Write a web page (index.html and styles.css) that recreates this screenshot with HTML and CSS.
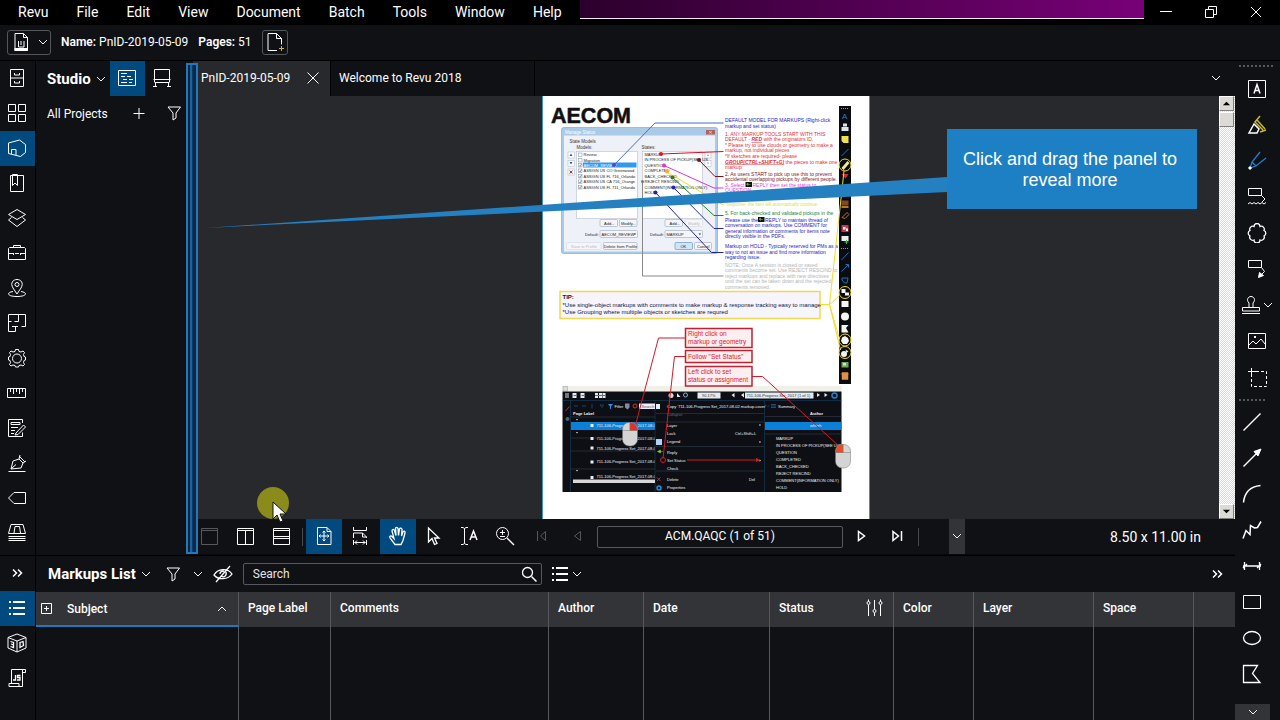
FILE: index.html
```html
<!DOCTYPE html>
<html lang="en">
<head>
	<meta charset="UTF-8">
	<meta name="viewport" content="width=device-width, initial-scale=1.0">
	<title>Revu</title>
	<link rel="stylesheet" href="styles.css">
</head>
<body>
	<!-- shared icons -->
	<svg class="sprite" aria-hidden="true">
		<symbol id="caret" viewBox="0 0 10 10"><path d="M1 3l4 4 4-4"/></symbol>
		<symbol id="filter" viewBox="0 0 20 20"><path d="M4 4h12.500l-4.500 6v5l-3 2v-7z"/></symbol>
		<symbol id="list" viewBox="0 0 20 20"><path stroke-width="2" d="M2 4h2M6 4h12M2 10h2M6 10h12M2 16h2M6 16h12"/></symbol>
		<symbol id="more" viewBox="0 0 20 20"><path stroke-width="1.500" d="M6 6.500l3.500 3.500-3.500 3.500M11 6.500l3.500 3.500-3.500 3.500"/></symbol>
	</svg>

	<header class="menubar">
		<nav class="menus">
			<button>Revu</button>
			<button>File</button>
			<button>Edit</button>
			<button>View</button>
			<button>Document</button>
			<button>Batch</button>
			<button>Tools</button>
			<button>Window</button>
			<button>Help</button>
		</nav>
		<div class="banner"></div>
		<div class="window-buttons">
			<button aria-label="Minimize"><svg class="icon" viewBox="0 0 20 20"><path d="M4 9.500h12"/></svg></button>
			<button aria-label="Restore"><svg class="icon" viewBox="0 0 20 20"><path d="M4.500 7.500h8v8h-8zM7.500 7v-2.500h8v8h-2.500"/></svg></button>
			<button aria-label="Close"><svg class="icon" viewBox="0 0 20 20"><path d="M5 5l10 10M15 5l-10 10"/></svg></button>
		</div>
	</header>

	<div class="infobar">
		<button class="boxed" aria-label="Document type">
			<svg class="icon" viewBox="0 0 20 20"><path d="M4 1.500h8.500l4 4v13h-12.500zM12.500 1.500v4h4"/><path fill="currentColor" stroke="none" d="M3.500 16h13v3h-13z"/><path d="M7.500 9v6h5.500v-6M10 9v4"/></svg>
			<svg class="caret"><use href="#caret"/></svg>
		</button>
		<p><b>Name:</b> PnID-2019-05-09</p>
		<p><b>Pages:</b> 51</p>
		<button class="boxed add-page" aria-label="Add page">
			<svg class="icon" viewBox="0 0 20 20"><path d="M12 18.500h-9v-17h8.500l5 5v6M11.500 1.500v5h5"/><path class="yellow" d="M16.500 14v5M14 16.500h5"/></svg>
		</button>
	</div>

	<main class="workspace">
		<nav class="rail rail-left" aria-label="Panels">
			<button aria-label="File access"><svg class="icon" viewBox="0 0 20 20"><path d="M3.500 1.500h13v17h-13zM3.500 10h13M7.500 5v2h5v-2M7.500 13v2h5v-2"/></svg></button>
			<button aria-label="Thumbnails"><svg class="icon" viewBox="0 0 20 20"><path d="M1.500 1.500h7v7h-7zM11.500 1.500h7v7h-7zM1.500 11.500h7v7h-7zM11.500 11.500h7v7h-7z"/></svg></button>
			<button class="on" aria-label="Studio"><svg class="icon" viewBox="0 0 20 20"><path d="M1.500 5l11-3 6 4.500v8l-5 4-12-3zM4.500 16v-4.500h4.500v5.500"/></svg></button>
			<button aria-label="Bookmarks"><svg class="icon" viewBox="0 0 20 20"><path d="M3.500 2.500h13v16h-13zM5.500 1.500h5v11l-2.500-2.500-2.500 2.500z"/></svg></button>
			<button aria-label="Layers"><svg class="icon" viewBox="0 0 20 20"><path d="M10 1.500l8.500 5-8.500 5-8.500-5zM4.500 9.500l-3 2.500 8.500 6.500 8.500-6.500-3-2.500"/></svg></button>
			<button aria-label="Tool chest"><svg class="icon" viewBox="0 0 20 20"><path d="M1.500 5.500l1-1h15l1 1v11h-17zM6.500 5v-2.500h7v2.500M1.500 10.500h4.500M8 10.500h4M14 10.500h4.500M6.500 10v2M13.500 10v2"/></svg></button>
			<button aria-label="Places"><svg class="icon" viewBox="0 0 20 20"><path d="M10 16l-4-6c-3-5 0-8.500 4-8.500s7 3.500 4 8.500zM6 13.500c-7 1-6 5 4 5s11-4 4-5"/><circle cx="10" cy="6.500" r="2"/></svg></button>
			<button aria-label="Spaces"><svg class="icon" viewBox="0 0 20 20"><path d="M1.500 18.500v-17h17v12h-4M1.500 8.500h3M7.500 8.500h4v-7M5 13.500h6M8.500 13.500v5h-7"/></svg></button>
			<button aria-label="Properties"><svg class="icon" viewBox="0 0 20 20"><path d="M8.500 1.500h3l.5 2 2 .5 2-1 1.500 1.500-1 2 .5 2 1.500 .5v3l-1.500.5-.5 2 1 2-1.500 1.500-2-1-2 .5-.5 1.500h-3l-.5-1.500-2-.5-2 1-1.500-1.500 1-2-.5-2-1.500-.5v-3l1.500-.5.5-2-1-2 1.500-1.500 2 1 2-.5z"/><circle cx="10" cy="10.500" r="4.500"/></svg></button>
			<button aria-label="Measurements"><svg class="icon" viewBox="0 0 20 20"><path d="M.500 5.500h18v9h-18zM3.500 6v3M6.500 6v5M9.500 6v3M12.500 6v5M15.500 6v3"/></svg></button>
			<button aria-label="Forms"><svg class="icon" viewBox="0 0 20 20"><path d="M15.500 5v-3.500h-14v17h14v-4M4 4.500h9v2h-9zM4 9.500h7M4 12.500h4M4 15.500h3M9 15l7.500-8 2 2-7.500 7.500-3 .5z"/></svg></button>
			<button aria-label="Signatures"><svg class="icon" viewBox="0 0 20 20"><path d="M1.500 18.500h17M4 16l2-8 6-2 4 4-2 5zM4 16l5-4.500M12 6l1-4M16 10l3-2M12 3l6 6"/></svg></button>
			<button aria-label="Flags"><svg class="icon" viewBox="0 0 20 20"><path d="M1.500 10l5.500-5.500h11.500v11h-11.500z"/></svg></button>
			<button aria-label="Sets"><svg class="icon" viewBox="0 0 20 20"><path d="M4 1.500h12l2.500 9h-17zM7 10l1-6.500h4.500l1 6.500M1.500 13.500h17M1.500 15.500h17M1.500 17.500h17"/></svg></button>
		</nav>

		<section class="upper">
			<aside class="studio">
				<div class="studio-head">
					<button class="panel-title">Studio <svg class="caret"><use href="#caret"/></svg></button>
					<button class="tool on" aria-label="Projects"><svg class="icon" viewBox="0 0 20 20"><path d="M1.500 2.500h17v15h-17zM4 5.500h6M4 8.500h4M10 8.500h4M6 11.500h4M12 11.500h4M4 14.500h6M12 14.500h3"/></svg></button>
					<button class="tool" aria-label="Sessions"><svg class="icon" viewBox="0 0 20 20"><path d="M2.500 14v-12.500h15v12.500M1.500 11.500h17M2.500 14.500h15M3.500 14.500v4M16.500 14.500v4M1 18.500h4M15 18.500h4"/></svg></button>
				</div>
				<div class="studio-filter">
					<span>All Projects</span>
					<button class="tool" aria-label="Add project"><svg class="icon" viewBox="0 0 20 20"><path d="M4.500 10.500h11M10 5v11"/></svg></button>
					<button class="tool" aria-label="Filter projects"><svg class="icon"><use href="#filter"/></svg></button>
				</div>
			</aside>

			<div class="splitter"></div>

			<div class="viewer">
				<div class="tabs">
					<div class="tab active"><a href="#doc">PnID-2019-05-09</a><button aria-label="Close tab"><svg class="icon" viewBox="0 0 20 20"><path d="M4.500 4.500l11 11M15.500 4.500l-11 11"/></svg></button></div>
					<div class="tab second"><a href="#welcome">Welcome to Revu 2018</a></div>
					<button class="tool tabs-more" aria-label="All tabs"><svg class="caret"><use href="#caret"/></svg></button>
				</div>

				<div class="canvas" id="doc">
					<!-- page, two units per pixel -->
					<svg class="page" viewBox="0 0 652 846" role="img" aria-label="Markup instructions page">
						<rect width="652" height="846" fill="#fff"/>
						<text x="16" y="54" class="logo">AECOM</text>

						<!-- state manager dialog -->
						<rect x="37" y="63" width="312" height="252" rx="4" fill="#a9cbe8" stroke="#6f93b8"/>
						<rect x="42" y="79" width="302" height="232" fill="#eef1f8"/>
						<text x="44" y="75" class="f9" fill="#fff">Manage Status</text>
						<rect x="326" y="68" width="18" height="9" fill="#b8605a"/>
						<path d="M332 70l6 5m0-5l-6 5" stroke="#fff"/>
						<g class="f9" fill="#333">
							<text x="53" y="93">State Models</text>
							<text x="67" y="105">Models:</text>
							<text x="197" y="105">States:</text>
						</g>
						<g fill="#fff" stroke="#a8b4c4">
							<rect x="67" y="111" width="122" height="134"/>
							<rect x="199" y="111" width="120" height="134"/>
							<rect x="50" y="112" width="13" height="12"/>
							<rect x="50" y="129" width="13" height="12"/>
							<rect x="50" y="146" width="13" height="12"/>
							<rect x="324" y="112" width="12" height="12"/>
							<rect x="324" y="129" width="12" height="12"/>
						</g>
						<path d="M56 115l3 5h-6zM56 137l3-5h-6z" fill="#2a62b8"/>
						<path d="M53 149l6 6m0-6l-6 6" stroke="#d02020" stroke-width="2"/>
						<path d="M330 116l2 4h-4zM330 137l2-4h-4z" fill="#999"/>
						<rect x="80" y="133" width="107" height="10" fill="#3399ee"/>
						<g fill="#fff" stroke="#7a8a9a">
							<rect x="71" y="114" width="7" height="7"/>
							<rect x="71" y="125" width="7" height="7"/>
							<rect x="71" y="135" width="7" height="7"/>
							<rect x="71" y="146" width="7" height="7"/>
							<rect x="71" y="157" width="7" height="7"/>
							<rect x="71" y="168" width="7" height="7"/>
							<rect x="71" y="179" width="7" height="7"/>
						</g>
						<path d="M73 139l1 2 3-5M73 150l1 2 3-5M73 161l1 2 3-5M73 172l1 2 3-5M73 183l1 2 3-5" fill="none" stroke="#333"/>
						<g class="f8" fill="#222">
							<text x="81" y="120">Review</text>
							<text x="81" y="131">Migration</text>
							<text x="81" y="141" fill="#fff">AECOM_REVIEW</text>
							<text x="81" y="152">ASSIGN US CO Greenwood</text>
							<text x="81" y="163">ASSIGN US FL 716_Orlando</text>
							<text x="81" y="174">ASSIGN US CA 716_Orange</text>
							<text x="81" y="185">ASSIGN US FL 711_Orlando</text>
							<text x="203" y="119">MARKUP</text>
							<text x="203" y="130">IN PROCESS OF PICKUP(SEE US</text>
							<text x="203" y="141">QUESTION</text>
							<text x="203" y="152">COMPLETED</text>
							<text x="203" y="163">BACK_CHECKED</text>
							<text x="203" y="173">REJECT RESCIND</text>
							<text x="203" y="185">COMMENT(INFORMATION ONLY)</text>
							<text x="203" y="195">HOLD</text>
						</g>
						<g fill="#f4f6fa" stroke="#8a98aa">
							<rect x="114" y="247" width="35" height="14" rx="2"/>
							<rect x="153" y="247" width="35" height="14" rx="2"/>
							<rect x="244" y="247" width="35" height="14" rx="2"/>
							<rect x="284" y="247" width="35" height="14" rx="2" stroke="#ccd4de"/>
							<rect x="114" y="269" width="75" height="14" rx="2"/>
							<rect x="244" y="269" width="75" height="14" rx="2"/>
							<rect x="47" y="293" width="69" height="14" rx="2" stroke="#ccd4de"/>
							<rect x="121" y="293" width="67" height="14" rx="2"/>
							<rect x="264" y="293" width="35" height="14" rx="2" fill="#cfe6f8" stroke="#3a7ab0"/>
							<rect x="303" y="293" width="34" height="14" rx="2"/>
						</g>
						<g class="f8" fill="#222">
							<text x="122" y="257">Add...</text>
							<text x="156" y="257">Modify...</text>
							<text x="253" y="257">Add...</text>
							<text x="290" y="257" fill="#bbb">Modify</text>
							<text x="84" y="279">Default:</text>
							<text x="117" y="279">AECOM_REVIEW</text>
							<text x="214" y="279">Default:</text>
							<text x="247" y="279">MARKUP</text>
							<text x="56" y="303" fill="#bbb">Save to Profile</text>
							<text x="122" y="303">Delete from Profile</text>
							<text x="275" y="303">OK</text>
							<text x="308" y="303">Cancel</text>
						</g>
						<path d="M181 275h5l-2 3zM311 275h5l-2 3z" fill="#222"/>

						<!-- leaders from states to notes -->
						<g class="leader">
							<path d="M142 138L224 54H361" stroke="#4a6ad0"/>
							<path d="M236 116L361 111" stroke="#d01020"/>
							<path d="M312 128L344 161H361" stroke="#801020"/>
							<path d="M242 139L342 184H361" stroke="#d838d8"/>
							<path d="M247 152L361 218" stroke="#f0dc20"/>
							<path d="M259 163L342 239H361" stroke="#208030"/>
							<path d="M261 183L342 265H361" stroke="#2828b0"/>
							<path d="M225 193L337 313H361" stroke="#2020a8"/>
							<path d="M199 171V360H361" stroke="#888"/>
						</g>
						<circle cx="142" cy="138" r="4" fill="#4848c8"/>
						<circle cx="236" cy="116" r="4" fill="#e01020"/>
						<circle cx="312" cy="128" r="4" fill="#801020"/>
						<circle cx="242" cy="139" r="4" fill="#e030e0"/>
						<circle cx="248" cy="151" r="4" fill="#f8b020"/>
						<circle cx="259" cy="163" r="4" fill="#407020"/>
						<circle cx="261" cy="183" r="4" fill="#2828a8"/>
						<circle cx="225" cy="193" r="4" fill="#2020a8"/>
						<circle cx="199" cy="171" r="3" fill="#777"/>

						<!-- notes -->
						<g class="f10" fill="#2424c0">
							<text x="364" y="52">DEFAULT MODEL FOR MARKUPS (Right-click</text>
							<text x="364" y="63">markup and set status)</text>
							<text x="364" y="251">Please use the</text>
							<rect x="430" y="242" width="13" height="10" fill="#111"/>
							<text x="444" y="251">REPLY to maintain thread of</text>
							<text x="364" y="262">conversation on markups. Use COMMENT for</text>
							<text x="364" y="273">general information or comments for items note</text>
							<text x="364" y="284">directly visible in the PDFs.</text>
							<text x="364" y="304">Markup on HOLD - Typically reserved for PMs as a</text>
							<text x="364" y="315">way to not an issue and find more information</text>
							<text x="364" y="326">regarding issue.</text>
						</g>
						<g class="f10" fill="#e03038">
							<text x="364" y="79">1. ANY MARKUP TOOLS START WITH THIS</text>
							<text x="364" y="90">DEFAULT - <tspan class="strong">RED</tspan> with the originators ID.</text>
							<text x="364" y="101">* Please try to use clouds or geometry to make a</text>
							<text x="364" y="112">markup, not individual pieces</text>
							<text x="364" y="124">*If sketches are required- please</text>
							<text x="364" y="135"><tspan class="strong">GROUP(CTRL+SHIFT+G)</tspan> the pieces to make one</text>
							<text x="364" y="146">markup</text>
						</g>
						<g class="f10" fill="#801828">
							<text x="364" y="159">2. As users START to pick up use this to prevent</text>
							<text x="364" y="170">accidental overlapping pickups by different people.</text>
						</g>
						<g class="f10" fill="#e040e0">
							<text x="364" y="181">3. Select</text>
							<rect x="405" y="172" width="13" height="10" fill="#111"/>
							<text x="419" y="181">REPLY then set the status to</text>
							<text x="364" y="192">QUESTION.</text>
						</g>
						<path d="M407 176l3-2v5zM410 177h5M432 246l3-2v5zM435 247h5" stroke="#7ac050" fill="#7ac050"/>
						<text x="368" y="220" class="f9" fill="#e8dc30">response, the item will automatically continue.</text>
						<text x="364" y="237" class="f10" fill="#208838">5. For back-checked and validated pickups in the</text>
						<g class="f10" fill="#b4b4b4">
							<text x="364" y="341">NOTE: Once A session is closed or saved</text>
							<text x="364" y="352">comments become set. Use REJECT RESCIND to</text>
							<text x="364" y="363">reject markups and replace with new directives</text>
							<text x="364" y="374">until the set can be taken down and the rejected</text>
							<text x="364" y="385">comments removed.</text>
						</g>

						<!-- tip -->
						<rect x="34" y="391" width="520" height="54" fill="#f6f5fc" stroke="#f0d850" stroke-width="3"/>
						<g class="f12" fill="#14143c">
							<text x="39" y="406" font-weight="bold">TIP:</text>
							<text x="39" y="421">*Use single-object markups with comments to make markup &amp; response tracking easy to manage</text>
							<text x="39" y="436">*Use Grouping where multiple objects or sketches are requred</text>
						</g>

						<!-- tool strip -->
						<rect x="592" y="20" width="24" height="556" fill="#0b0c10"/>
						<path d="M596 25h16M596 305h16" stroke="#999" stroke-width="2" stroke-dasharray="2 2"/>
						<text x="598" y="46" class="f16" fill="#2080d0">A</text>
						<path d="M597 62h14v8h-14zM600 55h8v6h-8z" fill="#dce4ec"/>
						<path d="M597 80h14v14h-10l-4-4z" fill="#f0e050"/>
						<path d="M597 120l14-14M597 328l14-15M597 351l14-14m-6 0h6v6" stroke="#2070b8" stroke-width="2" fill="none"/>
						<path d="M598 145l12-14M600 147l12-14" stroke="#f0e8a0" stroke-width="3"/>
						<path d="M597 156h14l-6 9z" fill="#c83040"/>
						<path d="M597 209h14v10h-14z" fill="#804828"/>
						<path d="M597 222h14" stroke="#e8a030" stroke-width="3"/>
						<path d="M598 243l10-10 4 4-8 8z" stroke="#b87030" fill="none" stroke-width="2"/>
						<path d="M597 258h14v14h-14z" fill="#d83048"/>
						<path d="M600 262h5v5h-5zM606 265h4v5h-4z" fill="#fff"/>
						<path d="M597 280h14v10h-14z" fill="#e8f0f4"/>
						<path d="M607 288v8m-4-4h8" stroke="#40b850" stroke-width="2"/>
						<path d="M598 364h12l-2 10h-5l-5-6z" stroke="#2070b8" fill="none" stroke-width="2"/>
						<path d="M597 386h8v8h-8zM604 393h8v6h-8zM597 410h14v12h-14zM597 458h14l-5 6 5 9h-14z" fill="#f4f6f4"/>
						<circle cx="604" cy="441" r="8" fill="#f4f6f4"/>
						<path d="M604 480l6 4 2 6-4 6h-8l-4-6 2-7z" fill="#f4f6f4"/>
						<circle cx="602" cy="516" r="6" fill="#f4f6f4"/>
						<path d="M605 507l6 4-4 3z" fill="#f4f6f4"/>
						<path d="M597 532h14v11h-14z" fill="#68a860"/>
						<path d="M600 534h6v5h-6z" fill="#e8e0a0"/>
						<path d="M598 553h12v14h-12zM595 556h17" fill="#e09048" stroke="#e09048"/>
						<g fill="none" stroke="#f4dc28" stroke-width="2">
							<circle cx="604" cy="138" r="12"/>
							<circle cx="604" cy="393" r="12"/>
							<circle cx="604" cy="488" r="12"/>
							<circle cx="604" cy="513" r="12"/>
							<path d="M554 417H573L602 150M573 417L592 400M573 417L593 486M573 417L595 508"/>
						</g>

						<!-- embedded screenshot -->
						<rect x="39" y="580" width="558" height="11" fill="#f0efe8"/>
						<rect x="40" y="581" width="9" height="9" fill="#ddd" stroke="#999"/>
						<rect x="39" y="591" width="558" height="201" fill="#0d0f14"/>
						<rect x="56" y="652" width="168" height="16" fill="#0b80d8"/>
						<g class="f8" fill="#eef2f6">
							<text x="60" y="637" font-weight="bold">Page Label</text>
							<text x="107" y="662">711-106-Progress Set_2017-08-02.mar</text>
							<text x="107" y="688">711-106-Progress Set_2017-08-02.mar</text>
							<text x="107" y="707">711-106-Progress Set_2017-08-02.mar</text>
							<text x="107" y="734">711-106-Progress Set_2017-08-02.mar</text>
							<text x="107" y="764">711-106-Progress Set_2017-08-02.mar</text>
						</g>
						<rect x="224" y="610" width="219" height="182" fill="#0d0f14"/>
						<path d="M39 609H597M55 609V792M224 609V792M443 609V792" stroke="#1a4a70"/>
						<g fill="#e4ecf2">
							<path d="M44 594h8v10h-8z" fill="#777"/>
							<path d="M59 594h8v10h-8zM75 594h8v10h-8zM104 594h6v10h-6zM112 594h6v10h-6zM119 594h6v10h-6z"/>
							<path d="M309 593h46v12h-46zM404 593h137v12h-137z"/>
							<path d="M268 594l7 8h-7zM377 598l6-4v9zM396 598l6-4v9zM548 594l6 4-6 4zM563 594l6 4-6 4z"/>
						</g>
						<path d="M61 599h5M77 599h5M104 599h21" stroke="#2080d0" stroke-width="2"/>
						<circle cx="256" cy="599" r="5" fill="#ddd"/>
						<circle cx="285" cy="598" r="4" fill="none" stroke="#8ad" stroke-width="2"/>
						<circle cx="583" cy="599" r="5" fill="none" stroke="#2080d0" stroke-width="3"/>
						<path d="M45 630l8-9" stroke="#e02020" stroke-width="2"/>
						<circle cx="49" cy="646" r="4" fill="#467"/>
						<path d="M62 620h8M78 620h8M98 616v9M114 618l4 5 3-5z" stroke="#2878b8"/>
						<path d="M130 616h10l-4 5v6l-2-2v-4z" fill="#2890e0"/>
						<circle cx="184" cy="620" r="4" stroke="#e03020" fill="none" stroke-width="2"/>
						<path d="M164 615h9v8l-4 4-5-4z" fill="#889"/>
						<path d="M192 615h32v11h-32z" fill="#eef"/>
						<rect x="444" y="652" width="153" height="16" fill="#0b80d8"/>
						<path d="M56 684H224M56 710H224M56 746H224M56 642H224M226 635H442M226 652H442M226 701H442M226 750H442M444 641H597M444 676H597" stroke="#3c4652"/>
						<g fill="#e8eef4">
							<path d="M95 656h6v6h-6zM95 682h6v6h-6zM95 701h6v6h-6zM95 729h6v6h-6zM95 760h6v6h-6z"/>
							<path d="M66 646h4l-2 3zM66 672h4l-2 3zM66 748h4l-2 3z"/>
							<path d="M226 616h8v10h-8z"/>
							<path d="M226 686h12v12h-12z" fill="#aad4f0"/>
						</g>
						<rect x="60" y="767" width="164" height="7" fill="#d8d8d8"/>
						<path d="M229 711l6-3v6zM234 711h6" stroke="#90d030" fill="#90d030"/>
						<path d="M228 763l7 7m0-7l-7 7" stroke="#d02030" stroke-width="2"/>
						<circle cx="232" cy="784" r="4" stroke="#2090e0" stroke-width="3" fill="none"/>
						<g class="f8" fill="#eef2f6">
							<text x="318" y="602" fill="#333">90.17%</text>
							<text x="407" y="602" fill="#333">711-106-Progress Set_2017 (1 of 1)</text>
							<text x="143" y="623">Filter</text>
							<text x="197" y="623" fill="#555">Search</text>
							<text x="248" y="623">Copy '711-106-Progress Set_2017-08-02 markup-cover'</text>
							<text x="248" y="640" fill="#667">Collapse</text>
							<text x="248" y="661">Layer</text>
							<text x="248" y="677">Lock</text>
							<text x="384" y="677">Ctrl+Shift+L</text>
							<text x="248" y="694">Legend</text>
							<text x="248" y="715">Reply</text>
							<text x="248" y="732">Set Status</text>
							<text x="248" y="748">Check</text>
							<text x="248" y="769">Delete</text>
							<text x="412" y="769">Del</text>
							<text x="248" y="786">Properties</text>
							<text x="470" y="623">Summary</text>
							<text x="534" y="637" font-weight="bold">Author</text>
							<text x="534" y="662">whiteh</text>
							<text x="466" y="687">MARKUP</text>
							<text x="466" y="701">IN PROCESS OF PICKUP(SEE USER)</text>
							<text x="466" y="715">QUESTION</text>
							<text x="466" y="730">COMPLETED</text>
							<text x="466" y="744">BACK_CHECKED</text>
							<text x="466" y="758">REJECT RESCIND</text>
							<text x="466" y="772">COMMENT(INFORMATION ONLY)</text>
							<text x="466" y="786">HOLD</text>
						</g>
						<path d="M456 617h10M456 620h10M456 623h10M452 619l-3 3" stroke="#2890e0"/>
						<path d="M433 656l3 2-3 2zM433 690l3 2-3 2zM433 727l3 2-3 2z" fill="#fff"/>

						<!-- click steps -->
						<g fill="none" stroke="#d81824" stroke-width="2">
							<path d="M285 484H231L184 662M285 521H263L240 725M418 561H439L594 702M288 728H430"/>
							<circle cx="240" cy="728" r="5"/>
						</g>
						<path d="M426 724l8 4-8 4z" fill="#d81824"/>
						<g fill="#fdeef0" stroke="#c02030" stroke-width="3">
							<rect x="285" y="465" width="133" height="38"/>
							<rect x="285" y="509" width="133" height="24"/>
							<rect x="285" y="541" width="133" height="39"/>
						</g>
						<g class="f13" fill="#e02030">
							<text x="290" y="480">Right click on</text>
							<text x="290" y="496">markup or geometry</text>
							<text x="290" y="525">Follow "Set Status"</text>
							<text x="290" y="556">Left click to set</text>
							<text x="290" y="572">status or assignment</text>
						</g>
						<g stroke="#777">
							<rect x="159" y="653" width="30" height="47" rx="13" fill="#d4d4d4"/>
							<path d="M174 653v16M159 669h30"/>
							<path d="M174 653q14 0 15 16h-15z" fill="#e83020"/>
							<rect x="585" y="697" width="30" height="47" rx="13" fill="#d4d4d4"/>
							<path d="M600 697v16M585 713h30"/>
							<path d="M600 697q-14 0-15 16h15z" fill="#f04820"/>
						</g>
					</svg>

					<div class="scrollbar">
						<button aria-label="Scroll up"><svg viewBox="0 0 10 10"><path d="M1 7l4-4 4 4z"/></svg></button>
						<span class="thumb"></span>
						<button class="down" aria-label="Scroll down"><svg viewBox="0 0 10 10"><path d="M1 3l4 4 4-4z"/></svg></button>
					</div>
				</div>

				<div class="navbar">
					<button class="off" aria-label="Single view"><svg class="icon" viewBox="0 0 20 20"><path d="M2.500 2.500h16v16h-16zM2 4.500h16"/></svg></button>
					<button aria-label="Split vertical"><svg class="icon" viewBox="0 0 20 20"><path d="M2.500 2.500h16v16h-16zM2 4.500h16M10.500 4v14"/></svg></button>
					<button aria-label="Split horizontal"><svg class="icon" viewBox="0 0 20 20"><path d="M2.500 2.500h16v16h-16zM2 4.500h16M2 10.500h16M2 12.500h16"/></svg></button>
					<span class="divider"></span>
					<button class="on" aria-label="Fit page"><svg class="icon" viewBox="0 0 20 20"><path d="M3.500 1.500h9.500l4 4v13h-13.500zM13 1.500v4h4M10 5v10M5 10h10M8.500 6.500l1.500-1.500 1.500 1.500M8.500 13.500l1.500 1.500 1.500-1.500M6.500 8.500l-1.500 1.500 1.500 1.500M13.500 8.500l1.500 1.500-1.500 1.500"/></svg></button>
					<button aria-label="Fit width"><svg class="icon" viewBox="0 0 20 20"><path d="M3.500 1v3.500h13v-3.500M3.500 12v-5h9l4 4v1M12.500 7v4h4M3.500 14v5M16.500 14v5M4.500 16.500h11M7 14.500l-2 2 2 2M13 14.500l2 2-2 2"/></svg></button>
					<button class="on pan" aria-label="Pan"><svg class="icon" viewBox="0 0 20 20"><path stroke-width="1.300" d="M7 18.500l-5-6.500c-1-2 1-2.500 2-1.500l2 2-2-7.500c0-2 2-2 2.500-.5l1.500 5-.500-7c0-1.500 2-1.500 2.500 0l.5 7 1-6.500c.5-1.500 2.500-1 2.500.5l-.5 6.500 1.500-4c.5-1.500 2.500-1 2 1l-2 7.500-2 4z"/></svg></button>
					<button aria-label="Select"><svg class="icon" viewBox="0 0 20 20"><path stroke-width="1.300" d="M5.500 2v14l3.500-3.500 2.500 6 2.500-1-2.500-5.500h4.500z"/></svg></button>
					<button aria-label="Select text"><svg class="icon" viewBox="0 0 20 20"><path d="M2 1.500h2l1.500 1 1.500-1h2M5.500 2.500v15M2 18.500h2l1.500-1 1.500 1h2"/><path stroke-width="1.500" d="M11 14l3.500-9 3.500 9M12.500 11h4.500"/></svg></button>
					<button aria-label="Zoom"><svg class="icon" viewBox="0 0 20 20"><circle cx="7.500" cy="7.500" r="6"/><path d="M7.500 4v5M5 6.500h5M5 10.500h5"/><path stroke-width="1.500" d="M12 12l7 7"/></svg></button>
					<button class="off" aria-label="First page"><svg class="icon" viewBox="0 0 20 20"><path d="M6.500 5v10M14.500 5.500v9l-5-4.500z"/></svg></button>
					<button class="off" aria-label="Previous page"><svg class="icon" viewBox="0 0 20 20"><path d="M13.500 5.500v9l-6-4.500z"/></svg></button>
					<input class="page-field" type="text" value="ACM.QAQC (1 of 51)" aria-label="Page">
					<button aria-label="Next page"><svg class="icon" viewBox="0 0 20 20"><path stroke-width="1.500" d="M7.500 5.500v9l6-4.500z"/></svg></button>
					<button aria-label="Last page"><svg class="icon" viewBox="0 0 20 20"><path stroke-width="1.500" d="M6 5.500v9l5.500-4.500zM14.500 5v10"/></svg></button>
					<span class="divider"></span>
					<button class="nav-more" aria-label="More"><svg class="caret"><use href="#caret"/></svg></button>
					<span class="page-size">8.50 x 11.00 in</span>
				</div>

				<!-- callout over the page -->
				<svg class="wedge" viewBox="0 0 742 52"><path d="M0 51L742 0v15z"/></svg>
				<div class="callout">Click and drag the panel to reveal more</div>
				<svg class="pointer" viewBox="0 0 34 38"><circle cx="17" cy="17" r="16" fill="#8b8b1b"/><path d="M17 16v17l4-4 3 7 3-1-3-7h6z" fill="#fff" stroke="#111"/></svg>
			</div>
		</section>

		<nav class="rail rail-right" aria-label="Markup tools">
			<span class="grip"></span>
			<div class="group first">
				<button aria-label="Text box"><svg class="icon" viewBox="0 0 20 20"><path d="M1.500 1.500h17v17h-17z"/><path stroke-width="1.500" d="M7 14.500l3-9 3 9M8 11.500h4"/></svg></button>
				<button aria-label="Highlight"><svg class="icon" viewBox="0 0 20 20"><path class="yellow" stroke-width="1.500" d="M13 1l-5 6 8 8M10 5l8 9M13 17l6-2"/><path stroke-width="1.500" d="M7 9l-5 9h8l2-4z"/></svg></button>
				<button aria-label="Pen"><svg class="icon" viewBox="0 0 20 20"><path class="blue" stroke-width="1.300" d="M13 1l-8 10-2 6 6-2 10-8M5 11l4 4"/><path stroke-width="3" d="M2 18l2-2"/></svg></button>
				<button aria-label="Text review"><svg class="icon" viewBox="0 0 20 20"><path d="M1.500 1.500h13v7h-13zM14.500 8.500l3.500 3.500-3 3M1 17l2-1.500 2 1.500 2-1.500 2 1.500 2-1.500 2 1.500 2-1.500 2 1.500 2-1.500"/></svg></button>
				<button aria-label="Cloud"><svg class="icon" viewBox="0 0 20 20"><path stroke-width="1.300" d="M7 3.500a3 3 0 0 1 6 0a3 3 0 0 1 4 4a3 3 0 0 1 0 5.500a3 3 0 0 1-4 4a3 3 0 0 1-6 0a3 3 0 0 1-4-4a3 3 0 0 1 0-5.500a3 3 0 0 1 4-4z"/></svg></button>
				<button aria-label="Callout"><svg class="icon" viewBox="0 0 20 20"><path d="M1.500 1.500h13v7h-13zM14.500 8.500l3 4-3 3"/><path fill="currentColor" d="M11.500 18.500l1-5 4 3z"/></svg></button>
				<button class="stamp" aria-label="Stamp"><svg class="icon" viewBox="0 0 20 20"><path d="M8 12v-4c-3-3-1-6.500 2-6.500s5 3.500 2 6.500v4M1.500 16v-3.500h17v3.500zM1 18.500h18"/></svg><svg class="caret"><use href="#caret"/></svg></button>
				<button aria-label="Image"><svg class="icon" viewBox="0 0 20 20"><path d="M1.500 2.500h17v15h-17zM2 14l4-4 3 3 5-5 4 5"/><path stroke-width="2" d="M7 6h2"/></svg></button>
				<button aria-label="Snapshot"><svg class="icon" viewBox="0 0 20 20"><path d="M1 4.500h8M4.500 1v7"/><path stroke-dasharray="3 2" d="M9 4.500h10.500v15h-15v-12"/></svg></button>
			</div>
			<span class="grip short"></span>
			<div class="group">
				<button aria-label="Line"><svg class="icon" viewBox="0 0 20 20"><path stroke-width="1.500" d="M1.500 18.500l17-17"/></svg></button>
				<button aria-label="Arrow"><svg class="icon" viewBox="0 0 20 20"><path stroke-width="1.500" d="M1.500 18.500l14-14"/><path fill="currentColor" d="M12 3.500l7-2.500-3 7z"/></svg></button>
				<button aria-label="Arc"><svg class="icon" viewBox="0 0 20 20"><path stroke-width="1.500" d="M1.500 18.500c1-10 7-16 17-17"/></svg></button>
				<button aria-label="Polyline"><svg class="icon" viewBox="0 0 20 20"><path stroke-width="1.500" d="M1 18.500l3-8 4 4 .5-9 4 2.500 3-.5 3.500-6"/></svg></button>
				<button aria-label="Dimension"><svg class="icon" viewBox="0 0 20 20"><path stroke-width="1.300" d="M2.500 6v8M17.500 6v8M1 10h18M5 8l-4 4M19 8l-4 4"/></svg></button>
				<button aria-label="Rectangle"><svg class="icon" viewBox="0 0 20 20"><path d="M1.500 3.500h17v13h-17z"/></svg></button>
				<button aria-label="Ellipse"><svg class="icon" viewBox="0 0 20 20"><ellipse stroke-width="1.300" cx="10" cy="10" rx="8.500" ry="6.500"/></svg></button>
				<button aria-label="Polygon"><svg class="icon" viewBox="0 0 20 20"><path stroke-width="1.300" d="M1.500 1.500h14l-5 8 7.500 9h-16.500z"/></svg></button>
			</div>
			<button class="rail-more" aria-label="More tools"><svg class="caret"><use href="#caret"/></svg></button>
		</nav>

		<nav class="rail rail-bottom" aria-label="Bottom panels">
			<button aria-label="Collapse"><svg class="icon"><use href="#more"/></svg></button>
			<button class="on" aria-label="Markups"><svg class="icon"><use href="#list"/></svg></button>
			<button aria-label="3D model"><svg class="icon" viewBox="0 0 20 20"><path d="M1 4.500l9-3.500 9 3.500v10.500l-9 4-9-4zM1 4.500l9 3.500 9-3.500M10 8v11"/><path stroke-width="1.300" d="M3.500 8.500l3 1v5l-3-1M4 11l2.500 1M13 9.500l3-1 .5 4-3.500 2z"/></svg></button>
			<button aria-label="JavaScript"><svg class="icon" viewBox="0 0 20 20"><path d="M4.500 15.500v-14h14v3h-3M15.500 2v16.500h-13.500v-3h10v3"/><path stroke-width="1.300" d="M8.500 7v5h-2.500M13.500 7.500h-3v2h2.500v2.500h-3"/></svg></button>
		</nav>

		<section class="markups">
			<div class="markups-head">
				<button class="panel-title">Markups List <svg class="caret"><use href="#caret"/></svg></button>
				<button class="filter" aria-label="Filter"><svg class="icon"><use href="#filter"/></svg><svg class="caret"><use href="#caret"/></svg></button>
				<button class="hide" aria-label="Hide markups"><svg class="icon" viewBox="0 0 20 20"><path stroke-width="1.300" d="M1 11c4-7 14-7 18-1c-4 6-14 6-18 1zM3 18l14-16M13 8c1 4-2 6-5 4M7 10c0-2 2-3 4-3"/></svg></button>
				<div class="search">
					<input type="text" placeholder="Search" aria-label="Search">
					<button aria-label="Search markups"><svg class="icon" viewBox="0 0 20 20"><circle stroke-width="1.300" cx="8.500" cy="8.500" r="5"/><path stroke-width="1.500" d="M12.500 12.500l5 5"/></svg></button>
				</div>
				<button class="view" aria-label="List view"><svg class="icon"><use href="#list"/></svg><svg class="caret"><use href="#caret"/></svg></button>
				<button class="expand" aria-label="More options"><svg class="icon"><use href="#more"/></svg></button>
			</div>
			<table class="list">
				<colgroup>
					<col class="w-subject"><col class="w-label"><col class="w-comments"><col class="w-author"><col class="w-date">
					<col class="w-status"><col class="w-color"><col class="w-layer"><col class="w-space"><col>
				</colgroup>
				<thead>
					<tr>
						<th class="sorted"><div><svg class="icon" viewBox="0 0 20 20"><path d="M4.500 4.500h10v10h-10zM7 9.500h5M9.500 7v5"/></svg><span>Subject</span><svg class="caret up"><use href="#caret"/></svg></div></th>
						<th>Page Label</th>
						<th>Comments</th>
						<th>Author</th>
						<th>Date</th>
						<th><div><span>Status</span><svg class="icon" viewBox="0 0 20 20"><path d="M4.500 7v11M10.500 2v9M10.500 15v3M16.500 7v11M4.500 1.500v2M16.500 1.500v2"/><circle cx="4.500" cy="5" r="1.500"/><circle cx="10.500" cy="13" r="1.500"/><circle cx="16.500" cy="5" r="1.500"/></svg></div></th>
						<th>Color</th>
						<th>Layer</th>
						<th>Space</th>
						<th></th>
					</tr>
				</thead>
				<tbody>
					<tr><td></td><td></td><td></td><td></td><td></td><td></td><td></td><td></td><td></td><td></td></tr>
				</tbody>
			</table>
		</section>
	</main>
</body>
</html>
```
FILE: styles.css
```css
* { box-sizing: border-box; }

body
{
	margin: 0;
	height: 100vh;
	overflow: hidden;
	display: flex;
	flex-direction: column;
	background: #101115;
	color: #fff;
	font-family: Roboto, "Liberation Sans", sans-serif;
	font-size: 12px;
}

button
{
	margin: 0;
	padding: 0;
	border: 0;
	background: none;
	color: inherit;
	font: inherit;
	display: flex;
	align-items: center;
	justify-content: center;
}

p { margin: 0; }
a { color: inherit; text-decoration: none; }

.sprite { display: none; }

.icon
{
	width: 20px;
	height: 20px;
	flex: none;
	fill: none;
	stroke: currentColor;
}

.caret
{
	width: 10px;
	height: 10px;
	flex: none;
	fill: none;
	stroke: currentColor;
}

.caret.up { transform: rotate(180deg); }
.yellow { stroke: #c8b830; }
.blue { stroke: #2080d0; }
.on { background: #004a80; }
.off { color: #56585c; }

/* top bars */

.menubar
{
	height: 25px;
	flex: none;
	display: flex;
	background: #000;
	font-size: 14px;
}

.menus
{
	display: flex;
	width: 580px;
	flex: none;
	padding-left: 4px;
}

.menus button { padding: 0 14px 1px; }

.banner
{
	flex: 1;
	height: 19px;
	background: linear-gradient(90deg, #2c002c, #780078);
	border-bottom: 1px solid #f4e8f4;
}

.window-buttons
{
	display: flex;
	width: 136px;
}

.window-buttons button { flex: 1; padding: 0 2px 1px 0; }

.infobar
{
	height: 36px;
	flex: none;
	display: flex;
	align-items: center;
	gap: 10px;
	padding: 0 7px 1px;
	border-bottom: 1px solid #000;
}

.infobar b { font-weight: 600; }

.boxed
{
	height: 25px;
	width: 44px;
	gap: 7px;
	border: 1px solid #55565a;
	border-radius: 3px;
}

.add-page { width: 26px; }

/* workspace */

.workspace
{
	flex: 1;
	min-height: 0;
	display: grid;
	grid-template-columns: 36px minmax(0, 1fr) 45px;
	grid-template-rows: minmax(0, 1fr) 165px;
}

.rail
{
	display: flex;
	flex-direction: column;
	overflow: hidden;
}

.rail-left, .rail-bottom { border-right: 1px solid #000; }
.rail-left button, .rail-bottom button { height: 35px; flex: none; padding: 0 1px 1px 0; }
.rail-bottom { border-top: 1px solid #000; }

.rail-right { grid-column: 3; grid-row: 1 / 3; }
.group { width: 34px; }
.group.first { width: 44px; }
.group button { width: 100%; height: 36px; }
.group .stamp { gap: 2px; }

.grip
{
	flex: none;
	width: 35px;
	height: 10px;
	margin-left: 4px;
	background: repeating-linear-gradient(90deg, #56585c 0 2px, transparent 2px 4px) center / 100% 2px no-repeat;
}

.grip.short { width: 28px; height: 9px; }

.rail-more
{
	width: 35px;
	height: 16px;
	margin-top: auto;
	background: #333438;
}

.upper { display: flex; min-width: 0; }

.studio { width: 150px; flex: none; }

.studio-head, .studio-filter
{
	display: flex;
	height: 35px;
	align-items: center;
	padding-left: 11px;
}

.panel-title
{
	font-size: 15px;
	font-weight: bold;
	gap: 5px;
}

.studio-head .panel-title { width: 63px; justify-content: flex-start; }
.tool { width: 35px; height: 35px; flex: none; padding: 0 1px 1px 0; }
.studio-filter span { width: 75px; flex: none; }

.splitter
{
	width: 12px;
	flex: none;
	margin: 2px -5px 1px 0;
	z-index: 1;
	border: 2px solid #2278bc;
	background: linear-gradient(90deg, #0c2238 0 2px, #1566a8 2px 4px, #0c3a66 4px 5px, #14283c 5px);
}

.viewer
{
	flex: 1;
	min-width: 0;
	position: relative;
	display: flex;
	flex-direction: column;
}

.tabs { display: flex; height: 35px; flex: none; }

.tab
{
	display: flex;
	align-items: center;
	padding: 0 0 2px 8px;
	border-right: 1px solid #000;
}

.tab.active { width: 138px; gap: 13px; background: #28292c; }
.tab.second { width: 204px; }
.tabs-more { margin-left: auto; margin-right: 1px; }

.canvas
{
	flex: 1;
	min-height: 0;
	display: flex;
	background: #28292c;
}

.page
{
	width: 328px;
	height: 423px;
	margin: 0 auto;
	border: 1px solid #3a94bc;
	border-width: 0 1px;
	font-family: "Liberation Sans", Arial, sans-serif;
}

.logo { font-size: 43px; font-weight: bold; fill: #111; stroke: #111; }
.f8 { font-size: 8px; }
.f9 { font-size: 9px; }
.f10 { font-size: 10px; }
.f12 { font-size: 12px; }
.f13 { font-size: 13px; }
.f16 { font-size: 16px; }
.strong { font-weight: bold; font-style: italic; text-decoration: underline; }
.leader { fill: none; stroke-width: 2; }

.scrollbar
{
	width: 16px;
	display: flex;
	flex-direction: column;
	gap: 1px;
	background: repeating-conic-gradient(#fff 0 25%, #dcdad4 0 50%) 0 0 / 2px 2px;
}

.scrollbar button, .thumb
{
	width: 15px;
	height: 15px;
	background: #dcdad4;
	border: 1px solid #fff;
	border-right-color: #808080;
	border-bottom-color: #808080;
}

.scrollbar svg { width: 9px; height: 9px; flex: none; }
.scrollbar .down { margin-top: auto; }

/* page navigation */

.navbar
{
	height: 36px;
	flex: none;
	display: flex;
	align-items: center;
	margin-left: -2px;
	border-bottom: 1px solid #08090b;
}

.navbar button { width: 36px; height: 35px; padding-bottom: 1px; }
.navbar .pan { margin: 0 -1px 0 2px; }

.divider
{
	width: 1px;
	height: 18px;
	margin: 0 3px;
	background: #46484c;
}

.page-field
{
	width: 246px;
	height: 22px;
	margin-left: 2px;
	padding: 0 2px 2px;
	border: 1px solid #56585c;
	border-radius: 2px;
	background: transparent;
	color: #fff;
	font: inherit;
	font-size: 12px;
	text-align: center;
}

.navbar .nav-more
{
	width: 16px;
	margin-left: 27px;
	background: #333438;
}

.page-size { margin: 0 34px 0 auto; font-size: 14px; }

/* callout */

.wedge
{
	position: absolute;
	left: 12px;
	top: 116px;
	width: 742px;
	height: 52px;
	fill: #2480c0;
}

.callout
{
	position: absolute;
	left: 754px;
	top: 68px;
	width: 250px;
	height: 80px;
	padding: 20px 18px 20px 14px;
	background: #1e80c4;
	font: 18px/21px "Liberation Sans", Arial, sans-serif;
	text-align: center;
}

.pointer
{
	position: absolute;
	left: 63px;
	top: 425px;
	width: 34px;
	height: 38px;
}

/* markups list */

.markups
{
	min-width: 0;
	display: flex;
	flex-direction: column;
	border-top: 1px solid #000;
}

.markups-head
{
	height: 36px;
	flex: none;
	display: flex;
	align-items: center;
	padding: 0 0 1px 12px;
}

.filter { margin-left: 12px; gap: 10px; }
.hide { margin: 0 10px; }

.search
{
	width: 299px;
	height: 22px;
	display: flex;
	align-items: center;
	border: 1px solid #56585c;
	border-radius: 2px;
}

.search input
{
	flex: 1;
	min-width: 0;
	padding: 0 9px;
	border: 0;
	background: transparent;
	color: #fff;
	font: inherit;
}

.search input::placeholder { color: #e4e4e4; }
.search button { margin-right: 2px; }
.view { margin-left: 8px; gap: 2px; }
.expand { margin: 0 8px 0 auto; }

.list
{
	width: 100%;
	flex: 1;
	table-layout: fixed;
	border-collapse: separate;
	border-spacing: 0;
}

.w-subject { width: 203px; }
.w-label { width: 92px; }
.w-comments { width: 218px; }
.w-author { width: 95px; }
.w-date { width: 126px; }
.w-status { width: 124px; }
.w-color { width: 80px; }
.w-layer { width: 120px; }
.w-space { width: 100px; }

.list th
{
	height: 35px;
	padding: 0 9px 3px;
	background: #333438;
	border-right: 1px solid #56585c;
	text-align: left;
	font-weight: 500;
}

.list td { padding: 0; border-right: 1px solid #56585c; }
.list th:last-child, .list td:last-child { border-right: 0; }
.list th div { display: flex; align-items: center; justify-content: space-between; }

.list th.sorted { padding: 0 11px 0 1px; border-bottom: 2px solid #2278bc; }
.sorted span { flex: 1; padding-left: 10px; }
```
